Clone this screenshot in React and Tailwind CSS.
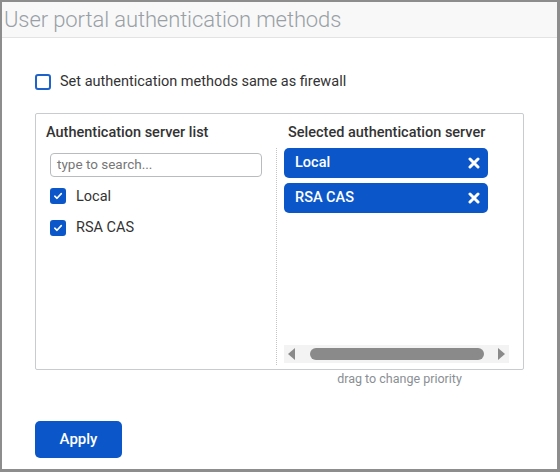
import React from 'react';

const font = { fontFamily: 'Roboto, "Noto Sans", sans-serif' };

function Check() {
  return (
    <span className="w-[16px] h-[16px] rounded-[3px] bg-[#0b57c9] flex items-center justify-center shrink-0">
      <svg width="10" height="10" viewBox="0 0 10 10" fill="none">
        <path d="M1.8 5.2 L4 7.3 L8.3 2.6" stroke="white" strokeWidth="1.6" strokeLinecap="round" strokeLinejoin="round" />
      </svg>
    </span>
  );
}

function Chip({ label }) {
  return (
    <div className="h-[30px] w-[204px] rounded-[5px] bg-[#0b57c9] flex items-center justify-between pl-[11px] pr-[8px] text-white text-[14.5px] font-medium">
      <span>{label}</span>
      <svg width="12" height="12" viewBox="0 0 12 12">
        <path d="M2 2 L10 10 M10 2 L2 10" stroke="white" strokeWidth="3" strokeLinecap="round" />
      </svg>
    </div>
  );
}

export default function App() {
  return (
    <div className="w-[560px] h-[472px] border-l-2 border-t-2 border-r-[3px] border-b-[3px] border-[#8d8d8d] bg-white flex flex-col" style={font}>
      <div className="h-[36px] bg-[#f8f8f8] border-b border-[#e3e3e3] flex items-center pl-[2px] shrink-0">
        <span className="text-[22px] font-light text-[#98a0a6] tracking-[-0.1px]">User portal authentication methods</span>
      </div>
      <div className="flex-1 pl-[33px] pt-[33px]">
        <label className="flex items-center gap-[9px]">
          <span className="w-[16px] h-[16px] rounded-[3px] border-2 border-[#1e63cc] bg-white" />
          <span className="text-[14.5px] text-[#333]">Set authentication methods same as firewall</span>
        </label>
        <div className="mt-[20px] w-[489px] h-[257px] border border-[#c9ccce] rounded-[2px] flex">
          <div className="w-[240px] pl-[10px] pt-[8px]">
            <div className="text-[14.5px] font-medium text-[#333]">Authentication server list</div>
            <div className="mt-[9px] ml-[4px] w-[212px] h-[24px] border border-[#b9bcbe] rounded-[4px] flex items-center px-[6px] text-[13.5px] text-[#777]">
              type to search...
            </div>
            <div className="mt-[9px] ml-[4px] flex flex-col gap-[10px]">
              <div className="flex items-center gap-[10px] text-[14.5px] text-[#333]"><Check /><span>Local</span></div>
              <div className="flex items-center gap-[10px] text-[14.5px] text-[#333]"><Check /><span>RSA CAS</span></div>
            </div>
          </div>
          <div className="flex-1 flex flex-col pt-[8px]">
            <div className="pl-[12px] text-[14.5px] font-medium text-[#333]">Selected authentication server</div>
            <div className="flex-1 flex mt-[4px] mb-[4px]">
              <div className="w-0 border-l border-dotted border-[#c4c4c4]" />
              <div className="flex-1 flex flex-col pl-[7px]">
                <div className="flex flex-col gap-[5px]">
                  <Chip label="Local" />
                  <Chip label="RSA CAS" />
                </div>
                <div className="mt-auto mb-[2px] w-[225px] h-[18px] bg-[#f3f3f3] flex items-center justify-between px-[4px]">
                  <svg width="8" height="12" viewBox="0 0 8 12"><path d="M7 0 L7 12 L0 6 Z" fill="#8a8a8a" /></svg>
                  <div className="w-[174px] h-[12px] rounded-full bg-[#8a8a8a]" />
                  <svg width="8" height="12" viewBox="0 0 8 12"><path d="M1 0 L1 12 L8 6 Z" fill="#8a8a8a" /></svg>
                </div>
              </div>
            </div>
          </div>
        </div>
        <div className="w-[489px] flex">
          <div className="w-[240px]" />
          <div className="flex-1 flex justify-center text-[12.5px] text-[#8a8f94]">drag to change priority</div>
        </div>
        <button className="mt-[32px] w-[87px] h-[37px] rounded-[5px] bg-[#0b57c9] text-white text-[15px] font-medium">Apply</button>
      </div>
    </div>
  );
}
